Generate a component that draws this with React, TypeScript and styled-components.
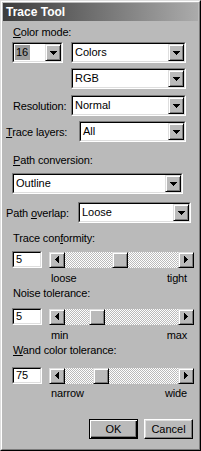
import React from 'react';
import styled, { createGlobalStyle, css } from 'styled-components';

const face = '#bababa';
const light = '#dedede';
const shadow = '#7b7b7b';

const GlobalStyle = createGlobalStyle`
    html, body {
        margin: 0;
        padding: 0;
        background: ${face};
    }
    body {
        font-family: "Liberation Sans", Arial, sans-serif;
        font-size: 11px;
        color: #000;
    }
`;

const Window = styled.div`
    box-sizing: border-box;
    width: 201px;
    height: 451px;
    border: 1px solid;
    border-color: ${light} #000 #000 ${light};
    background: ${face};
`;

const Frame = styled.div`
    box-sizing: border-box;
    height: 100%;
    padding: 1px;
    border: 1px solid;
    border-color: #fff ${shadow} ${shadow} #fff;
    display: flex;
    flex-direction: column;
`;

const TitleBar = styled.div`
    height: 18px;
    line-height: 18px;
    padding-left: 3px;
    background: linear-gradient(to right, #3c3c3c, #ababab);
    color: #fff;
    font-weight: bold;
    font-size: 12px;
    white-space: nowrap;
`;

const Body = styled.div`
    flex: 1;
    display: flex;
    flex-direction: column;
`;

const Caption = styled.div<{ $top: number; $left: number }>`
    margin: ${p => p.$top}px 0 0 ${p => p.$left}px;
    height: 13px;
    line-height: 13px;
    letter-spacing: -0.15px;
    white-space: nowrap;
`;

const Key = styled.span`
    text-decoration: underline;
`;

const Row = styled.div<{ $top: number; $left: number; $gap?: number }>`
    display: flex;
    align-items: center;
    margin: ${p => p.$top}px 0 0 ${p => p.$left}px;
    gap: ${p => p.$gap ?? 0}px;
`;

const RowLabel = styled.div<{ $width: number }>`
    width: ${p => p.$width}px;
    flex: none;
    letter-spacing: -0.15px;
    white-space: nowrap;
`;

const Sunken = styled.div<{ $width: number; $height: number }>`
    box-sizing: border-box;
    width: ${p => p.$width}px;
    height: ${p => p.$height}px;
    flex: none;
    display: flex;
    border: 1px solid;
    border-color: ${shadow} #fff #fff ${shadow};
`;

const Well = styled.div`
    flex: 1;
    min-width: 0;
    display: flex;
    align-items: center;
    border: 1px solid;
    border-color: #000 ${light} ${light} #000;
    background: #fff;
`;

const FieldText = styled.span<{ $selected?: boolean }>`
    flex: 1;
    padding-left: 2px;
    line-height: 13px;
    white-space: nowrap;
    overflow: hidden;
    ${p => p.$selected && css`
        flex: none;
        margin-left: 1px;
        padding: 1px 2px 1px 1px;
        background: #9c9c9c;
    `}
`;

const bevel = css`
    box-sizing: border-box;
    background: ${face};
    border: 1px solid;
    border-color: ${light} #000 #000 ${light};
    box-shadow: inset 1px 1px #fff, inset -1px -1px ${shadow};
`;

const DropButton = styled.div`
    ${bevel};
    width: 16px;
    height: 17px;
    flex: none;
    display: flex;
    align-items: center;
    justify-content: center;
`;

const ScrollBar = styled.div`
    width: 145px;
    height: 16px;
    flex: none;
    display: flex;
`;

const ArrowButton = styled.div`
    ${bevel};
    width: 16px;
    height: 16px;
    flex: none;
    display: flex;
    align-items: center;
    justify-content: center;
`;

const Track = styled.div`
    flex: 1;
    display: flex;
    background-color: #fff;
    background-image: repeating-conic-gradient(${face} 0 25%, #fff 0 50%);
    background-size: 2px 2px;
`;

const Spacer = styled.div<{ $width: number }>`
    width: ${p => p.$width}px;
    flex: none;
`;

const Thumb = styled.div`
    ${bevel};
    width: 16px;
    height: 16px;
    flex: none;
`;

const Scale = styled.div<{ $top: number }>`
    display: flex;
    justify-content: space-between;
    width: 136px;
    height: 13px;
    line-height: 13px;
    margin: ${p => p.$top}px 0 0 48px;
    letter-spacing: -0.15px;
`;

const Buttons = styled.div`
    display: flex;
    justify-content: flex-end;
    gap: 6px;
    margin: 19px 5px 0 0;
`;

const PushButton = styled.button<{ $default?: boolean }>`
    ${bevel};
    width: 49px;
    height: 20px;
    padding: 0;
    font: inherit;
    color: #000;
    border-color: #fff #000 #000 #fff;
    box-shadow: inset -1px -1px ${shadow}, inset 1px 1px ${light};
    ${p => p.$default && css`
        border-color: #000;
        box-shadow: inset 1px 1px #fff, inset -1px -1px #000, inset -2px -2px ${shadow};
    `}
`;

const DownArrow = () => (
    <svg width="7" height="4" viewBox="0 0 7 4" shapeRendering="crispEdges">
        <path d="M0 0h7v1H0z M1 1h5v1H1z M2 2h3v1H2z M3 3h1v1H3z" fill="#000" />
    </svg>
);

const SideArrow: React.FC<{ right?: boolean }> = ({ right }) => (
    <svg width="4" height="7" viewBox="0 0 4 7" shapeRendering="crispEdges">
        <path
            d={right
                ? 'M0 0h1v7H0z M1 1h1v5H1z M2 2h1v3H2z M3 3h1v1H3z'
                : 'M3 0h1v7H3z M2 1h1v5H2z M1 2h1v3H1z M0 3h1v1H0z'}
            fill="#000"
        />
    </svg>
);

const Combo: React.FC<{ width: number; value: string; selected?: boolean }> = ({ width, value, selected }) => (
    <Sunken $width={width} $height={21}>
        <Well>
            <FieldText $selected={selected}>{value}</FieldText>
            {selected && <FieldText />}
            <DropButton>
                <DownArrow />
            </DropButton>
        </Well>
    </Sunken>
);

const Slider: React.FC<{ top: number; value: string; offset: number }> = ({ top, value, offset }) => (
    <Row $top={top} $left={9} $gap={7}>
        <Sunken $width={30} $height={17}>
            <Well>
                <FieldText>{value}</FieldText>
            </Well>
        </Sunken>
        <ScrollBar>
            <ArrowButton>
                <SideArrow />
            </ArrowButton>
            <Track>
                <Spacer $width={offset} />
                <Thumb />
            </Track>
            <ArrowButton>
                <SideArrow right />
            </ArrowButton>
        </ScrollBar>
    </Row>
);

const App: React.FC = () => (
    <>
        <GlobalStyle />
        <Window>
            <Frame>
                <TitleBar>Trace Tool</TitleBar>
                <Body>
                    <Caption $top={5} $left={10}>
                        <Key>C</Key>olor mode:
                    </Caption>
                    <Row $top={3} $left={9} $gap={8}>
                        <Combo width={51} value="16" selected />
                        <Combo width={115} value="Colors" />
                    </Row>
                    <Row $top={5} $left={68}>
                        <Combo width={115} value="RGB" />
                    </Row>
                    <Row $top={6} $left={10}>
                        <RowLabel $width={58}>Resolution:</RowLabel>
                        <Combo width={115} value="Normal" />
                    </Row>
                    <Row $top={5} $left={3}>
                        <RowLabel $width={73}>
                            <Key>T</Key>race layers:
                        </RowLabel>
                        <Combo width={107} value="All" />
                    </Row>
                    <Caption $top={12} $left={10}>
                        <Key>P</Key>ath conversion:
                    </Caption>
                    <Row $top={6} $left={9}>
                        <Combo width={171} value="Outline" />
                    </Row>
                    <Row $top={8} $left={3}>
                        <RowLabel $width={72}>
                            Path <Key>o</Key>verlap:
                        </RowLabel>
                        <Combo width={113} value="Loose" />
                    </Row>
                    <Caption $top={9} $left={10}>
                        Trace con<Key>f</Key>ormity:
                    </Caption>
                    <Slider top={6} value="5" offset={47} />
                    <Scale $top={4}>
                        <span>loose</span>
                        <span>tight</span>
                    </Scale>
                    <Caption $top={2} $left={10}>
                        Noise tolerance:
                    </Caption>
                    <Slider top={8} value="5" offset={24} />
                    <Scale $top={4}>
                        <span>min</span>
                        <span>max</span>
                    </Scale>
                    <Caption $top={2} $left={10}>
                        <Key>W</Key>and color tolerance:
                    </Caption>
                    <Slider top={10} value="75" offset={28} />
                    <Scale $top={3}>
                        <span>narrow</span>
                        <span>wide</span>
                    </Scale>
                    <Buttons>
                        <PushButton $default>OK</PushButton>
                        <PushButton>Cancel</PushButton>
                    </Buttons>
                </Body>
            </Frame>
        </Window>
    </>
);

export default App;
